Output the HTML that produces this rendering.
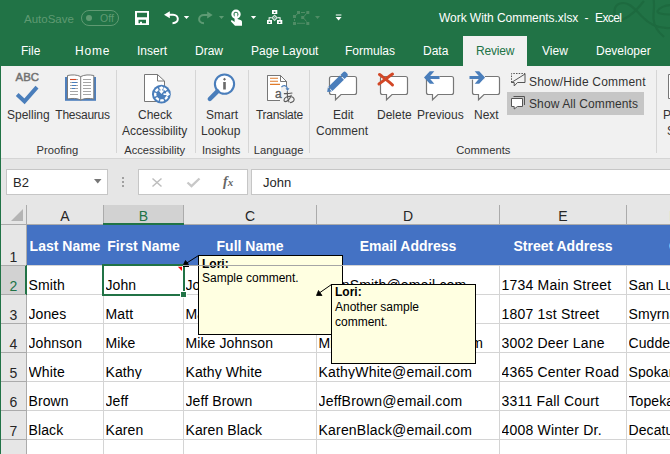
<!DOCTYPE html>
<html><head><meta charset="utf-8">
<style>
*{margin:0;padding:0;box-sizing:border-box}
html,body{width:670px;height:454px;overflow:hidden;background:#fff}
body{position:relative;font-family:"Liberation Sans",sans-serif}
.a{position:absolute}
.t{position:absolute;white-space:nowrap;line-height:1}
svg{position:absolute;overflow:visible}
</style></head><body>

<!-- title + tabs -->
<div class="a" style="left:0;top:0;width:670px;height:66px;background:#217346"></div>
<!-- QAT -->
<div class="t" id="autosave" style="left:24px;top:14px;font-size:11.5px;color:#5f9a72">AutoSave</div>
<div class="a" style="left:81px;top:10px;width:38px;height:16px;border:1px solid #5f9a72;border-radius:8px"></div>
<div class="a" style="left:86px;top:15px;width:6px;height:6px;border-radius:3px;background:#5f9a72"></div>
<div class="t" style="left:100px;top:13px;font-size:10.5px;color:#5f9a72">Off</div>

<div class="t" id="title" style="z-index:2;left:439px;top:12px;font-size:12px;letter-spacing:-0.05px;color:#fff">Work With Comments.xlsx</div>
<div class="t" style="z-index:2;left:584.5px;top:12px;font-size:12px;color:#fff">-</div>
<div class="t" style="z-index:2;left:595px;top:12px;font-size:12px;letter-spacing:-0.6px;color:#fff">Excel</div>

<!-- tabs -->
<div class="a" style="left:463px;top:36px;width:64px;height:30px;background:#f1f1f1"></div>
<div class="t" style="left:21px;top:45px;font-size:12px;color:#fff">File</div>
<div class="t" style="left:75px;top:45px;font-size:12px;letter-spacing:0.8px;color:#fff">Home</div>
<div class="t" style="left:137px;top:45px;font-size:12px;color:#fff">Insert</div>
<div class="t" style="left:195px;top:45px;font-size:12px;color:#fff">Draw</div>
<div class="t" style="left:251px;top:45px;font-size:12px;color:#fff">Page Layout</div>
<div class="t" style="left:345px;top:45px;font-size:12px;color:#fff">Formulas</div>
<div class="t" style="left:423px;top:45px;font-size:12px;color:#fff">Data</div>
<div class="t" style="left:476px;top:45px;font-size:12px;letter-spacing:-0.2px;color:#217346">Review</div>
<div class="t" style="left:542px;top:45px;font-size:12px;color:#fff">View</div>
<div class="t" style="left:596px;top:45px;font-size:12px;color:#fff">Developer</div>

<!-- ribbon -->
<div class="a" style="left:0;top:66px;width:670px;height:93px;background:#f1f1f1;border-bottom:1px solid #d5d5d5"></div>
<div class="a" style="left:0;top:159px;width:670px;height:46px;background:#e6e6e6"></div>

<!-- group separators -->
<div class="a" style="left:116px;top:70px;width:1px;height:83px;background:#d6d6d6"></div>
<div class="a" style="left:195px;top:70px;width:1px;height:83px;background:#d6d6d6"></div>
<div class="a" style="left:248px;top:70px;width:1px;height:83px;background:#d6d6d6"></div>
<div class="a" style="left:309px;top:70px;width:1px;height:83px;background:#d6d6d6"></div>
<div class="a" style="left:656px;top:70px;width:1px;height:83px;background:#d6d6d6"></div>

<!-- ribbon labels -->
<div id="rib" style="font-size:12px;color:#333">
<div class="t" style="left:7px;top:109px">Spelling</div>
<div class="t" style="left:55.3px;top:109px;letter-spacing:-0.25px">Thesaurus</div>
<div class="t" style="left:138px;top:109px">Check</div>
<div class="t" style="left:122px;top:125px">Accessibility</div>
<div class="t" style="left:206px;top:109px">Smart</div>
<div class="t" style="left:201px;top:125px">Lookup</div>
<div class="t" style="left:256px;top:109px;letter-spacing:-0.3px">Translate</div>
<div class="t" style="left:333px;top:109px">Edit</div>
<div class="t" style="left:316px;top:125px">Comment</div>
<div class="t" style="left:377px;top:109px">Delete</div>
<div class="t" style="left:417px;top:109px">Previous</div>
<div class="t" style="left:474px;top:109px">Next</div>
<div class="a" style="left:507px;top:92px;width:137px;height:23px;background:#c6c6c6"></div>
<div class="t" style="left:529px;top:76px;letter-spacing:0.2px">Show/Hide Comment</div>
<div class="t" style="left:529px;top:98px;letter-spacing:0.1px">Show All Comments</div>
<div class="t" style="left:663px;top:109px">P</div>
<div class="t" style="left:667px;top:125px">S</div>
<div class="t" style="left:7.4px;top:144.5px;width:100px;text-align:center;font-size:11.2px">Proofing</div>
<div class="t" style="left:104.7px;top:144.5px;width:100px;text-align:center;font-size:11.2px">Accessibility</div>
<div class="t" style="left:171.2px;top:144.5px;width:100px;text-align:center;font-size:11.2px">Insights</div>
<div class="t" style="left:228.6px;top:144.5px;width:100px;text-align:center;font-size:11.2px">Language</div>
<div class="t" style="left:433.3px;top:144.5px;width:100px;text-align:center;font-size:11.2px">Comments</div>
</div>

<!-- formula bar -->
<div class="a" style="left:6px;top:169px;width:102px;height:26px;background:#fff;border:1px solid #c6c6c6"></div>
<div class="t" style="left:13px;top:176px;font-size:13px;color:#262626">B2</div>
<svg style="left:94px;top:179px" width="10" height="6"><path d="M0 0H7.5L3.75 4.5Z" fill="#767676"/></svg>
<div class="a" style="left:122px;top:177px;width:2px;height:2px;background:#a0a0a0"></div>
<div class="a" style="left:122px;top:181px;width:2px;height:2px;background:#a0a0a0"></div>
<div class="a" style="left:122px;top:185px;width:2px;height:2px;background:#a0a0a0"></div>
<div class="a" style="left:138px;top:169px;width:110px;height:26px;background:#fff;border:1px solid #c6c6c6"></div>
<svg style="left:151px;top:177px" width="12" height="11"><path d="M1.5 1.5L10.5 9.5M10.5 1.5L1.5 9.5" stroke="#bdbdbd" stroke-width="1.5"/></svg>
<svg style="left:186px;top:177px" width="15" height="11"><path d="M1.5 5.5L5.5 9.2L13.5 1.5" stroke="#c8c8c8" stroke-width="2.3" fill="none"/></svg>
<div class="t" style="left:223px;top:175px;font-size:14px;font-family:'Liberation Serif',serif;font-style:italic;font-weight:bold;color:#666">f<span style="font-size:11px;letter-spacing:-0.5px">x</span></div>
<div class="a" style="left:251px;top:169px;width:420px;height:26px;background:#fff;border:1px solid #c6c6c6"></div>
<div class="t" style="left:263px;top:176px;font-size:13px;color:#262626">John</div>

<!-- grid -->
<!--ICONS-->
<svg style="left:0;top:0" width="670" height="66">
<g fill="none" stroke="#1d6a3f" stroke-width="2.2">
<path d="M621 20.4C613 19 612 6 620 3.5C628 1 634 8 642 16.5C648 23 656 29 670 28"/>
<path d="M644 1C638 8 632 16 621 20.4"/>
<path d="M653.5 -1C655 6 653 13 653.5 19C654 26 658 32 664 37"/>
<path d="M671 5C665 5 659 8 657.6 11C657 13 661 14.5 671 14.5"/>
</g>
<path d="M135 11H149V25H135Z M137 12.8V17.3H147V12.8Z M138.5 19.7V23.2H140V21.7H142V23.2H146V19.7Z" fill="#fff" fill-rule="evenodd"/>
<path d="M164 14.7L169.8 11.2V18.2Z" fill="#fff"/>
<path d="M168 14.7H173C179 14.7 180 23 172.5 23.2" fill="none" stroke="#fff" stroke-width="2"/>
<path d="M183.8 16H189.2L186.5 19Z" fill="#fff"/>
<path d="M212.7 15.1L207.2 11.6V18.6Z" fill="#5d9a73"/>
<path d="M209 15.1H204C198 15.1 197 23 204 23.2" fill="none" stroke="#5d9a73" stroke-width="2"/>
<path d="M218.9 16H224L221.5 19Z" fill="#5d9a73"/>
<circle cx="236" cy="14.2" r="3.6" fill="none" stroke="#fff" stroke-width="2.2"/>
<path d="M234.6 13.5C234.6 12.5 237.4 12.5 237.4 13.5V19L240.5 20C242 20.5 242 21.5 242 22.5V25.8H235L231 21.5C230.5 20.6 231.6 19.8 232.5 20.5L234.6 22Z" fill="#fff"/>
<path d="M250.9 16H256.2L253.5 19Z" fill="#fff"/>
<g fill="#fff">
<path d="M272 10H277.3V14H272Z"/>
<path d="M274.6 14.5L278 17.8L274.6 21.2L271.2 17.8Z" opacity="0.8"/>
<path d="M267 20H272V24H267Z"/>
<path d="M277 20H282.3V24H277Z"/>
<path d="M268.6 17.2H271.5V18.2H269.6V20H268.6Z"/>
<path d="M277.7 17.2H280.6V20H279.6V18.2H277.7Z"/>
</g>
<g fill="#217346">
<rect x="273.8" y="11.6" width="1.6" height="1.4"/><rect x="268.7" y="21.6" width="1.6" height="1.4"/><rect x="278.8" y="21.6" width="1.6" height="1.4"/>
<rect x="274.1" y="16.3" width="1" height="1"/><rect x="274.1" y="18.3" width="1" height="1"/><rect x="273.1" y="17.3" width="1" height="1"/><rect x="275.1" y="17.3" width="1" height="1"/>
</g>
<g fill="#4f8c65">
<rect x="293" y="15" width="3" height="3"/><rect x="297" y="11" width="3" height="3"/><rect x="306.3" y="11" width="3" height="3"/>
<rect x="301.2" y="16" width="3" height="3"/><rect x="293" y="22" width="3" height="3"/><rect x="306.3" y="22" width="3" height="3"/>
<rect x="301" y="12" width="4" height="1"/><rect x="297" y="22.8" width="8" height="1"/><rect x="294" y="19" width="1" height="2"/>
<path d="M296 15L297.5 14M304 16.5L306.5 13.5M304 18.5L306.5 21.5" stroke="#4f8c65" stroke-width="1"/>
<path d="M315 16H320L317.5 19Z"/>
</g>
<path d="M335.8 14.5H341.4V15.5H335.8Z M335.6 17H341.6L338.6 20.6Z" fill="#fff"/>
</svg>

<svg style="left:0;top:66px" width="670" height="92">
<g transform="translate(0,-66)">
<text x="15.6" y="81.1" font-family="Liberation Sans" font-size="11.4" fill="#707070" stroke="#707070" stroke-width="0.45">ABC</text>
<path d="M17.2 94.5L24.5 101.3L37 87.2" fill="none" stroke="#4a7ebb" stroke-width="4"/>

<rect x="65" y="77" width="31" height="23.8" fill="#4e7fbd"/>
<path d="M67.5 75.5C72 74.6 77 74.6 80.7 76.6C84.4 74.6 89.4 74.6 93.8 75.5V99C89.4 98.1 84.4 98.1 80.7 100C77 98.1 72 98.1 67.5 99Z" fill="#fff" stroke="#7a7a7a" stroke-width="1"/>
<path d="M80.7 76.6V100" stroke="#7a7a7a" stroke-width="1"/>
<g stroke-width="1.1">
<path d="M70 79.5H78M83 79.5H91M70 82.5H78M83 82.5H91M70 85.5H78M83 85.5H91M70 88.5H78M83 88.5H91M70 91.5H78M83 91.5H91M70 94.5H78M83 94.5H91" stroke="#a6a6a6"/>
<path d="M70 79.5H76" stroke="#d24726"/>
<path d="M72 82.5H77M72 85.5H76M72 88.5H75" stroke="#4a7ebb"/>
</g>

<path d="M144.5 74.5H157.5L164.5 81V101.5H144.5Z" fill="#fff" stroke="#777" stroke-width="1"/>
<path d="M157.5 74.5V81H164.5" fill="none" stroke="#777" stroke-width="1"/>
<circle cx="161.4" cy="94.2" r="9.4" fill="#4a7ebb"/>
<circle cx="161.4" cy="94.2" r="6.2" fill="none" stroke="#fff" stroke-width="2.3" stroke-dasharray="3.4 1.45" transform="rotate(-70 161.4 94.2)"/>
<path d="M161.4 86.5V92.5" stroke="#fff" stroke-width="1.6"/>
<path d="M158.6 90.5L161.4 94L164.2 90.5Z" fill="#fff"/>
<path d="M163.5 94.2H167.5" stroke="#fff" stroke-width="1.6"/>
<path d="M166.5 91.4L170.2 94.2L166.5 97Z" fill="#fff"/>

<circle cx="224.5" cy="84.1" r="9.6" fill="#fff" stroke="#4a7ebb" stroke-width="2.1"/>
<path d="M217.4 91.4L209.8 99" stroke="#4a7ebb" stroke-width="4.4" stroke-linecap="round"/>
<rect x="223.2" y="82" width="2.6" height="7.5" fill="#6a6a6a"/>
<path d="M224.5 77.8L226 79.3L224.5 80.8L223 79.3Z" fill="#6a6a6a"/>

<path d="M267.5 75.5H280.5L286.5 81.5V87M280 100.5H267.5V75.5" fill="#fff" stroke="#777" stroke-width="1"/>
<path d="M267.5 75.5H280.5L286.5 81.5V86H281V95L277 100.5H267.5Z" fill="#fff"/>
<path d="M267.5 100.5V75.5H280.5L286.5 81.5V86.5M267.5 100.5H278" fill="none" stroke="#777" stroke-width="1"/>
<path d="M280.5 75.5V81.5H286.5" fill="none" stroke="#777" stroke-width="1"/>
<path d="M270 78.2H278M270 81.3H278M270 84.4H280" stroke="#e07b2b" stroke-width="1.1"/>
<path d="M281.5 87.2C283 85 286.5 85 287.5 88.5" fill="none" stroke="#4a7ebb" stroke-width="1.2"/>
<path d="M285.5 88.3H289.5L287.5 91Z" fill="#4a7ebb"/>
<text x="275" y="97.8" font-family="Liberation Sans" font-size="12" fill="#5a5a5a" stroke="#5a5a5a" stroke-width="0.3">a</text>
<g fill="none" stroke="#5a5a5a" stroke-width="1.1" stroke-linecap="round">
<path d="M284.3 93.6C286.5 93.8 289.5 93.5 292 93"/>
<path d="M287.3 91.6C287 95 287.5 99 289 102"/>
<path d="M291.2 95.2C290 98.5 287.5 101.5 285.3 101.6C283.5 101.7 283.6 98.7 285.8 97.4C288.5 95.8 292.5 96 293.8 98.3C295 100.5 293 102.2 290.5 102.6"/>
</g>

<path d="M331.5 76.5H354.5Q356.5 76.5 356.5 78.5V92.5Q356.5 94.5 354.5 94.5H341L335.5 99.8V94.5H331.5Q329.5 94.5 329.5 92.5V78.5Q329.5 76.5 331.5 76.5Z" fill="#fff" stroke="#777" stroke-width="1.2"/>
<g transform="translate(327.2 92) rotate(-44.5)" fill="#4a7ebb">
<path d="M0 0L3.8 -2.9V2.9Z"/>
<path d="M4.5 -2.9H20.6V2.9H4.5Z"/>
<path d="M21.4 -2.9H25.2Q27.2 -2.9 27.2 -0.9V0.9Q27.2 2.9 25.2 2.9H21.4Z"/>
</g>

<path d="M382.5 76.5H405.5Q407.5 76.5 407.5 78.5V92.5Q407.5 94.5 405.5 94.5H392L386.5 99.8V94.5H382.5Q380.5 94.5 380.5 92.5V78.5Q380.5 76.5 382.5 76.5Z" fill="#fff" stroke="#777" stroke-width="1.2"/>
<path d="M379.5 74.5C384 78 389 81.5 392.5 85M392.5 74C388 77 383 81 379 84" stroke="#d24726" stroke-width="3" stroke-linecap="round" fill="none"/>

<path d="M428.5 76.5H451.5Q453.5 76.5 453.5 78.5V92.5Q453.5 94.5 451.5 94.5H438L432.5 99.8V94.5H428.5Q426.5 94.5 426.5 92.5V78.5Q426.5 76.5 428.5 76.5Z" fill="#fff" stroke="#777" stroke-width="1.2"/>
<rect x="433.5" y="75.5" width="6" height="4" fill="#f1f1f1"/>
<path d="M424 77.5L429.8 71.3H434.3L430.2 76H439.5V79H430.2L434.3 83.7H429.8Z" fill="#4a7ebb"/>

<path d="M474.5 76.5H497.5Q499.5 76.5 499.5 78.5V92.5Q499.5 94.5 497.5 94.5H484L478.5 99.8V94.5H474.5Q472.5 94.5 472.5 92.5V78.5Q472.5 76.5 474.5 76.5Z" fill="#fff" stroke="#777" stroke-width="1.2"/>
<rect x="470" y="75.2" width="15" height="4.4" fill="#f1f1f1"/>
<path d="M485 77.5L479.2 71.3H474.7L478.8 76H469.5V79H478.8L474.7 83.7H479.2Z" fill="#4a7ebb"/>

<path d="M511.5 82.5V73.5H525" fill="none" stroke="#555" stroke-width="1" stroke-dasharray="1.5 1.2"/>
<path d="M525 73.5V82.5H517.5L514.2 86V82.5H511.5M511.5 82.5L525 74" fill="none" stroke="#555" stroke-width="1"/>
<path d="M513.5 96.5H524.5V105" fill="none" stroke="#555" stroke-width="1"/>
<path d="M511.5 98.5H522.5V106.5H517.5L514.2 109V106.5H511.5Z" fill="#fff" stroke="#555" stroke-width="1"/>

<path d="M668.5 74.5H675V98.5H668.5Z" fill="#fff" stroke="#777" stroke-width="1"/>
</g>
</svg>
<!--/ICONS-->
<!--GRID-->
<div class="a" style="left:0;top:205px;width:670px;height:20px;background:#e6e6e6"></div>
<div class="a" style="left:0;top:225px;width:26px;height:229px;background:#e6e6e6"></div>
<div class="a" style="left:104px;top:205px;width:79px;height:18px;background:#d2d2d2"></div>
<div class="a" style="left:0;top:266px;width:25px;height:28px;background:#d2d2d2"></div>
<div class="a" style="left:26px;top:205px;width:1px;height:20px;background:#ababab"></div>
<div class="a" style="left:103px;top:205px;width:1px;height:20px;background:#ababab"></div>
<div class="a" style="left:183px;top:205px;width:1px;height:20px;background:#ababab"></div>
<div class="a" style="left:316px;top:205px;width:1px;height:20px;background:#ababab"></div>
<div class="a" style="left:499px;top:205px;width:1px;height:20px;background:#ababab"></div>
<div class="a" style="left:626px;top:205px;width:1px;height:20px;background:#ababab"></div>
<div class="a" style="left:0;top:224px;width:670px;height:1px;background:#ababab"></div>
<div class="a" style="left:103px;top:223px;width:81px;height:2px;background:#217346"></div>
<div class="a" style="left:26px;top:205px;width:1px;height:249px;background:#ababab"></div>
<div class="a" style="left:25px;top:265px;width:2px;height:30px;background:#217346"></div>
<div class="a" style="left:0;top:265px;width:26px;height:1px;background:#ababab"></div>
<div class="a" style="left:0;top:294px;width:26px;height:1px;background:#ababab"></div>
<div class="a" style="left:0;top:323px;width:26px;height:1px;background:#ababab"></div>
<div class="a" style="left:0;top:352px;width:26px;height:1px;background:#ababab"></div>
<div class="a" style="left:0;top:381px;width:26px;height:1px;background:#ababab"></div>
<div class="a" style="left:0;top:410px;width:26px;height:1px;background:#ababab"></div>
<div class="a" style="left:0;top:439px;width:26px;height:1px;background:#ababab"></div>
<div class="a" style="left:0;top:468px;width:26px;height:1px;background:#ababab"></div>
<svg style="left:11px;top:209px" width="13" height="13"><path d="M12 0V12H0Z" fill="#b4b4b4"/></svg>
<div class="a" style="left:27px;top:225px;width:643px;height:40px;background:#4472c4"></div>
<div class="a" style="left:27px;top:265px;width:643px;height:1px;background:#d4d4d4"></div>
<div class="a" style="left:27px;top:294px;width:643px;height:1px;background:#d4d4d4"></div>
<div class="a" style="left:27px;top:323px;width:643px;height:1px;background:#d4d4d4"></div>
<div class="a" style="left:27px;top:352px;width:643px;height:1px;background:#d4d4d4"></div>
<div class="a" style="left:27px;top:381px;width:643px;height:1px;background:#d4d4d4"></div>
<div class="a" style="left:27px;top:410px;width:643px;height:1px;background:#d4d4d4"></div>
<div class="a" style="left:27px;top:439px;width:643px;height:1px;background:#d4d4d4"></div>
<div class="a" style="left:27px;top:468px;width:643px;height:1px;background:#d4d4d4"></div>
<div class="a" style="left:103px;top:266px;width:1px;height:188px;background:#d4d4d4"></div>
<div class="a" style="left:183px;top:266px;width:1px;height:188px;background:#d4d4d4"></div>
<div class="a" style="left:316px;top:266px;width:1px;height:188px;background:#d4d4d4"></div>
<div class="a" style="left:499px;top:266px;width:1px;height:188px;background:#d4d4d4"></div>
<div class="a" style="left:626px;top:266px;width:1px;height:188px;background:#d4d4d4"></div>
<div class="t" style="left:27px;top:209px;width:76px;text-align:center;font-size:14px;color:#262626">A</div>
<div class="t" style="left:104px;top:209px;width:79px;text-align:center;font-size:14px;color:#217346">B</div>
<div class="t" style="left:184px;top:209px;width:132px;text-align:center;font-size:14px;color:#262626">C</div>
<div class="t" style="left:317px;top:209px;width:182px;text-align:center;font-size:14px;color:#262626">D</div>
<div class="t" style="left:500px;top:209px;width:126px;text-align:center;font-size:14px;color:#262626">E</div>
<div class="t" style="left:627px;top:209px;width:93px;text-align:center;font-size:14px;color:#262626">F</div>
<div class="t" style="left:1px;top:250px;width:25px;text-align:center;font-size:14px;color:#262626">1</div>
<div class="t" style="left:1px;top:279px;width:25px;text-align:center;font-size:14px;color:#217346">2</div>
<div class="t" style="left:1px;top:308px;width:25px;text-align:center;font-size:14px;color:#262626">3</div>
<div class="t" style="left:1px;top:337px;width:25px;text-align:center;font-size:14px;color:#262626">4</div>
<div class="t" style="left:1px;top:366px;width:25px;text-align:center;font-size:14px;color:#262626">5</div>
<div class="t" style="left:1px;top:395px;width:25px;text-align:center;font-size:14px;color:#262626">6</div>
<div class="t" style="left:1px;top:424px;width:25px;text-align:center;font-size:14px;color:#262626">7</div>
<div class="t" style="left:1px;top:453px;width:25px;text-align:center;font-size:14px;color:#262626">8</div>
<div class="t" style="left:669px;top:239px;font-size:14px;font-weight:bold;color:#fff">City</div>
<div class="t" style="left:27px;top:239px;width:76px;text-align:center;font-size:14px;font-weight:bold;color:#fff">Last Name</div>
<div class="t" style="left:104px;top:239px;width:79px;text-align:center;font-size:14px;font-weight:bold;color:#fff">First Name</div>
<div class="t" style="left:184px;top:239px;width:132px;text-align:center;font-size:14px;font-weight:bold;color:#fff">Full Name</div>
<div class="t" style="left:317px;top:239px;width:182px;text-align:center;font-size:14px;font-weight:bold;color:#fff">Email Address</div>
<div class="t" style="left:500px;top:239px;width:126px;text-align:center;font-size:14px;font-weight:bold;color:#fff">Street Address</div>
<div class="t" style="left:28.5px;top:278px;font-size:14px;letter-spacing:0.1px;color:#000;width:74px;overflow:hidden">Smith</div>
<div class="t" style="left:105.5px;top:278px;font-size:14px;letter-spacing:0.1px;color:#000;width:77px;overflow:hidden">John</div>
<div class="t" style="left:185.5px;top:278px;font-size:14px;letter-spacing:0.1px;color:#000;width:130px;overflow:hidden">John Smith</div>
<div class="t" style="left:318.5px;top:278px;font-size:14px;letter-spacing:0.2px;color:#000;width:180px;overflow:hidden">JohnSmith@email.com</div>
<div class="t" style="left:501.5px;top:278px;font-size:14px;letter-spacing:0.2px;color:#000;width:124px;overflow:hidden">1734 Main Street</div>
<div class="t" style="left:628.5px;top:278px;font-size:14px;letter-spacing:0.1px;color:#000;width:200px;overflow:hidden">San Luis Obispo</div>
<div class="t" style="left:28.5px;top:307px;font-size:14px;letter-spacing:0.1px;color:#000;width:74px;overflow:hidden">Jones</div>
<div class="t" style="left:105.5px;top:307px;font-size:14px;letter-spacing:0.1px;color:#000;width:77px;overflow:hidden">Matt</div>
<div class="t" style="left:185.5px;top:307px;font-size:14px;letter-spacing:0.1px;color:#000;width:130px;overflow:hidden">Matt Jones</div>
<div class="t" style="left:318.5px;top:307px;font-size:14px;letter-spacing:0.2px;color:#000;width:180px;overflow:hidden">MattJones@email.com</div>
<div class="t" style="left:501.5px;top:307px;font-size:14px;letter-spacing:0.2px;color:#000;width:124px;overflow:hidden">1807 1st Street</div>
<div class="t" style="left:628.5px;top:307px;font-size:14px;letter-spacing:0.1px;color:#000;width:200px;overflow:hidden">Smyrna</div>
<div class="t" style="left:28.5px;top:336px;font-size:14px;letter-spacing:0.1px;color:#000;width:74px;overflow:hidden">Johnson</div>
<div class="t" style="left:105.5px;top:336px;font-size:14px;letter-spacing:0.1px;color:#000;width:77px;overflow:hidden">Mike</div>
<div class="t" style="left:185.5px;top:336px;font-size:14px;letter-spacing:0.1px;color:#000;width:130px;overflow:hidden">Mike Johnson</div>
<div class="t" style="left:318.5px;top:336px;font-size:14px;letter-spacing:0.2px;color:#000;width:180px;overflow:hidden">MikeJohnson@email.com</div>
<div class="t" style="left:501.5px;top:336px;font-size:14px;letter-spacing:0.2px;color:#000;width:124px;overflow:hidden">3002 Deer Lane</div>
<div class="t" style="left:628.5px;top:336px;font-size:14px;letter-spacing:0.1px;color:#000;width:200px;overflow:hidden">Cuddebackville</div>
<div class="t" style="left:28.5px;top:365px;font-size:14px;letter-spacing:0.1px;color:#000;width:74px;overflow:hidden">White</div>
<div class="t" style="left:105.5px;top:365px;font-size:14px;letter-spacing:0.1px;color:#000;width:77px;overflow:hidden">Kathy</div>
<div class="t" style="left:185.5px;top:365px;font-size:14px;letter-spacing:0.1px;color:#000;width:130px;overflow:hidden">Kathy White</div>
<div class="t" style="left:318.5px;top:365px;font-size:14px;letter-spacing:0.2px;color:#000;width:180px;overflow:hidden">KathyWhite@email.com</div>
<div class="t" style="left:501.5px;top:365px;font-size:14px;letter-spacing:0.2px;color:#000;width:124px;overflow:hidden">4365 Center Road</div>
<div class="t" style="left:628.5px;top:365px;font-size:14px;letter-spacing:0.1px;color:#000;width:200px;overflow:hidden">Spokane</div>
<div class="t" style="left:28.5px;top:394px;font-size:14px;letter-spacing:0.1px;color:#000;width:74px;overflow:hidden">Brown</div>
<div class="t" style="left:105.5px;top:394px;font-size:14px;letter-spacing:0.1px;color:#000;width:77px;overflow:hidden">Jeff</div>
<div class="t" style="left:185.5px;top:394px;font-size:14px;letter-spacing:0.1px;color:#000;width:130px;overflow:hidden">Jeff Brown</div>
<div class="t" style="left:318.5px;top:394px;font-size:14px;letter-spacing:0.2px;color:#000;width:180px;overflow:hidden">JeffBrown@email.com</div>
<div class="t" style="left:501.5px;top:394px;font-size:14px;letter-spacing:0.2px;color:#000;width:124px;overflow:hidden">3311 Fall Court</div>
<div class="t" style="left:628.5px;top:394px;font-size:14px;letter-spacing:0.1px;color:#000;width:200px;overflow:hidden">Topeka</div>
<div class="t" style="left:28.5px;top:423px;font-size:14px;letter-spacing:0.1px;color:#000;width:74px;overflow:hidden">Black</div>
<div class="t" style="left:105.5px;top:423px;font-size:14px;letter-spacing:0.1px;color:#000;width:77px;overflow:hidden">Karen</div>
<div class="t" style="left:185.5px;top:423px;font-size:14px;letter-spacing:0.1px;color:#000;width:130px;overflow:hidden">Karen Black</div>
<div class="t" style="left:318.5px;top:423px;font-size:14px;letter-spacing:0.2px;color:#000;width:180px;overflow:hidden">KarenBlack@email.com</div>
<div class="t" style="left:501.5px;top:423px;font-size:14px;letter-spacing:0.2px;color:#000;width:124px;overflow:hidden">4008 Winter Dr.</div>
<div class="t" style="left:628.5px;top:423px;font-size:14px;letter-spacing:0.1px;color:#000;width:200px;overflow:hidden">Decatur</div>
<div class="a" style="left:102px;top:264px;width:83px;height:32px;border:2px solid #217346"></div>
<div class="a" style="left:180px;top:291px;width:7px;height:7px;background:#fff"></div>
<div class="a" style="left:181px;top:292px;width:5px;height:5px;background:#217346"></div>
<!--/GRID-->
<!--COMMENTS-->
<svg style="left:177px;top:266px" width="6" height="6"><path d="M0.8 0.8H5V5Z" fill="#ff0000"/></svg>
<div class="a" style="left:198px;top:255px;width:145px;height:80px;background:#ffffe1;border:1px solid #000"></div>
<div class="t" style="left:202px;top:258px;font-size:12px;font-weight:bold;color:#000">Lori:</div>
<div class="t" style="left:202px;top:272px;font-size:12px;color:#000">Sample comment.</div>
<div class="a" style="left:183px;top:265px;width:160px;height:1px;background:#a6a6a6"></div>
<div class="a" style="left:183px;top:266px;width:6px;height:1px;background:#000"></div>
<svg style="left:0;top:0" width="670" height="454"><path d="M198.5 255.5L186 263.5" stroke="#000" stroke-width="1"/><path d="M183.5 264.5L188.5 264.5L185.5 260.5Z" fill="#000" stroke="#000" stroke-width="0.8"/></svg>
<div class="a" style="left:331px;top:284px;width:145px;height:80px;background:#ffffe1;border:1px solid #000"></div>
<div class="t" style="left:335px;top:286px;font-size:12px;font-weight:bold;color:#000">Lori:</div>
<div class="t" style="left:335px;top:301px;font-size:12px;color:#000">Another sample</div>
<div class="t" style="left:335px;top:316px;font-size:12px;color:#000">comment.</div>
<svg style="left:0;top:0" width="670" height="454"><path d="M331.5 284.5L320 292.5" stroke="#000" stroke-width="1"/><path d="M316.5 295.5L322 295.5L318.5 290.5Z" fill="#000" stroke="#000" stroke-width="0.8"/></svg>
<!--/COMMENTS-->
<div class="a" style="left:0;top:0;width:1px;height:454px;background:#217346;z-index:9"></div>
</body></html>
